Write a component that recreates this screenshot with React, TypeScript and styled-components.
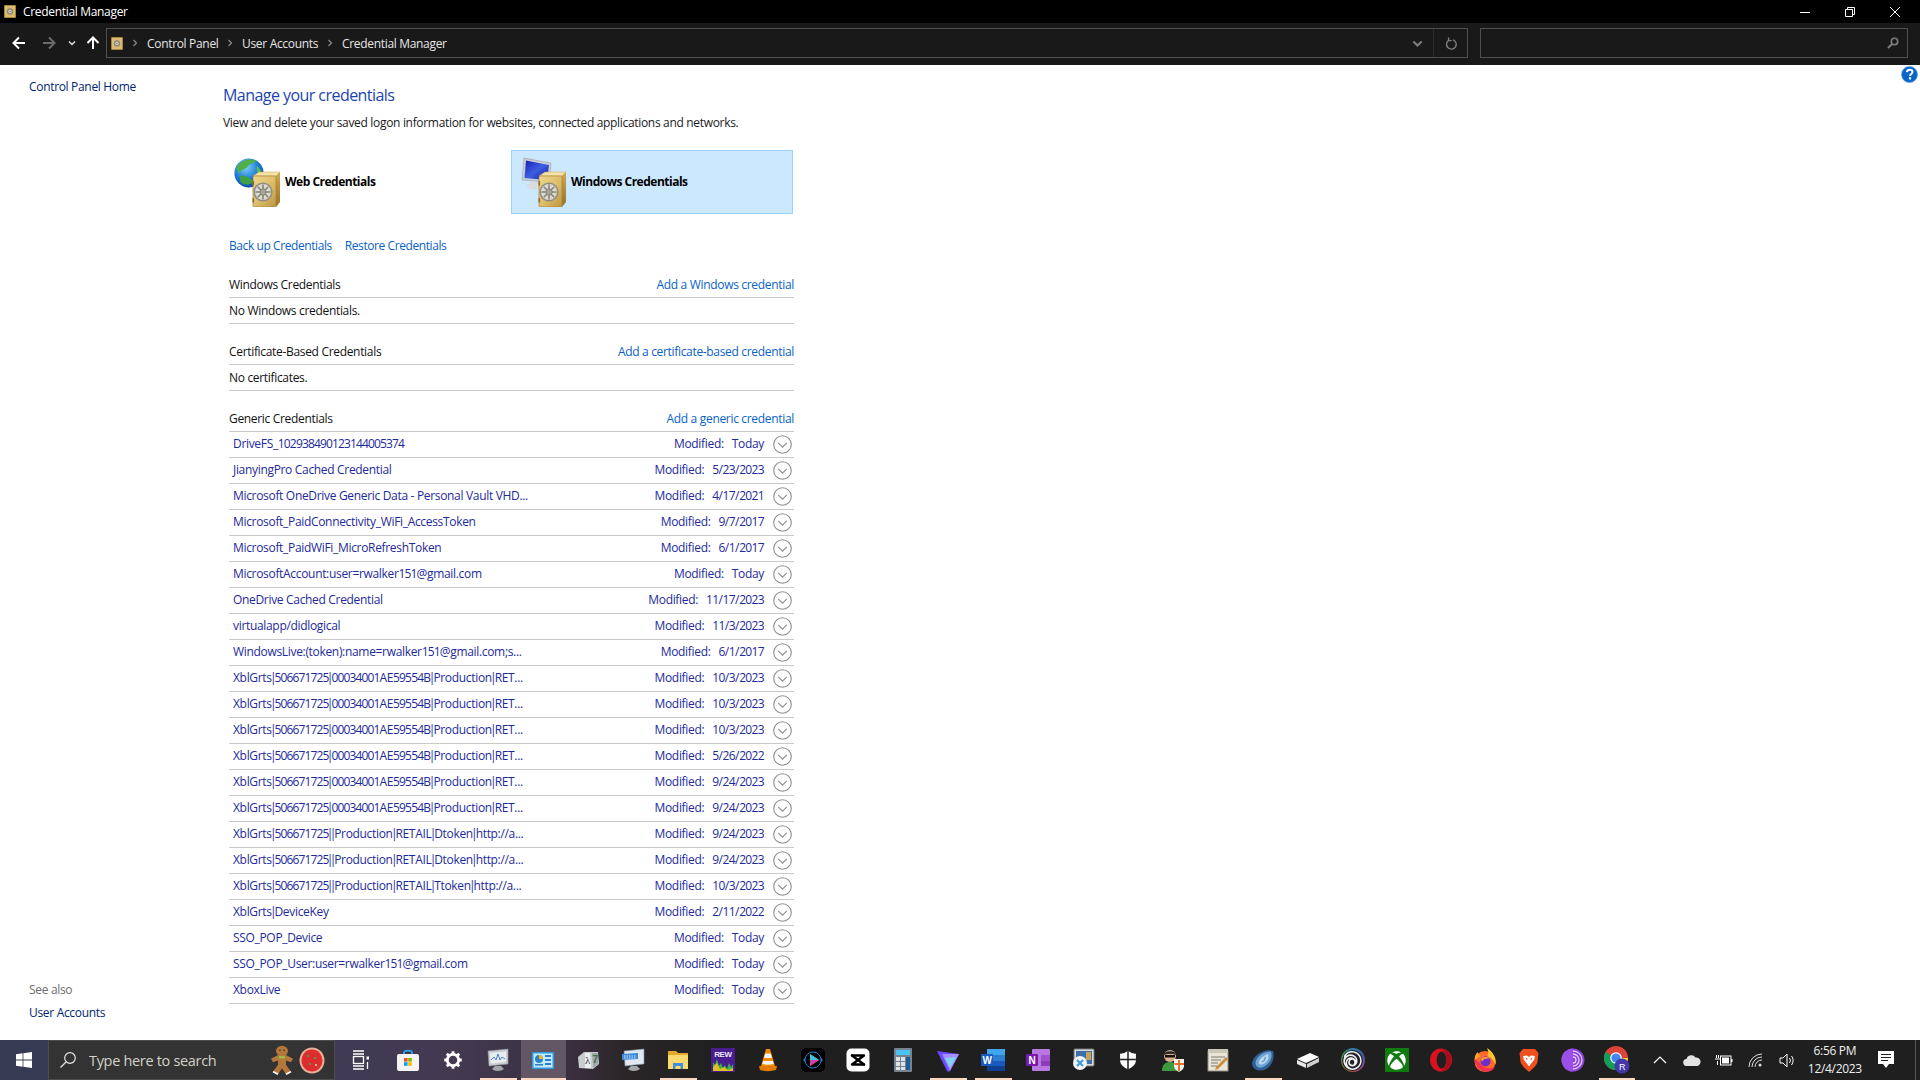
import React from "react";
import styled, { createGlobalStyle } from "styled-components";
import { FaXbox } from "react-icons/fa";
import { SiUbisoft } from "react-icons/si";

const FONT = `"Open Sans", "Noto Sans", sans-serif`;

const GlobalStyle = createGlobalStyle`
  html, body {
    margin: 0;
    padding: 0;
    width: 1920px;
    height: 1080px;
    overflow: hidden;
    background: #fff;
  }
  * { box-sizing: border-box; }
`;

const Page = styled.div`
  display: flex;
  flex-direction: column;
  width: 1920px;
  height: 1080px;
  font-family: ${FONT};
  font-size: 12px;
  letter-spacing: -0.32px;
`;

/* ---- title bar + address bar ---- */

const TitleBar = styled.div`
  display: flex;
  align-items: center;
  height: 23px;
  flex: none;
  background: #000;
  color: #fff;
  padding-left: 4px;
`;

const TitleText = styled.span`
  margin-left: 7px;
`;

const WindowButtons = styled.div`
  display: flex;
  margin-left: auto;
  padding-right: 3px;
`;

const WindowButton = styled.div`
  display: flex;
  align-items: center;
  justify-content: center;
  width: 45px;
  height: 21px;
`;

const ToolBar = styled.div`
  display: flex;
  align-items: center;
  height: 42px;
  flex: none;
  background: #191919;
  padding: 0 12px 2px 0;
`;

const NavGroup = styled.div`
  display: flex;
  align-items: center;
  width: 106px;
  flex: none;
`;

const NavButton = styled.div<{ $w: number }>`
  display: flex;
  align-items: center;
  justify-content: center;
  width: ${(p) => p.$w}px;
  height: 30px;
`;

const AddressBox = styled.div`
  display: flex;
  align-items: center;
  width: 1362px;
  height: 30px;
  flex: none;
  border: 1px solid #4f4f4f;
  color: #e6e6e6;
  padding-left: 4px;
`;

const Crumb = styled.span<{ $w: number }>`
  display: inline-block;
  width: ${(p) => p.$w}px;
  white-space: nowrap;
`;

const CrumbSep = styled.span`
  display: flex;
  justify-content: center;
  width: 24px;
`;

const AddressEnd = styled.div`
  display: flex;
  align-items: center;
  margin-left: auto;
  height: 100%;
`;

const AddressDrop = styled.div`
  display: flex;
  align-items: center;
  justify-content: center;
  width: 32px;
  height: 100%;
  border-right: 1px solid #2b2b2b;
`;

const AddressRefresh = styled.div`
  display: flex;
  align-items: center;
  justify-content: center;
  width: 33px;
  height: 100%;
`;

const SearchBox = styled.div`
  display: flex;
  align-items: center;
  justify-content: flex-end;
  width: 428px;
  height: 30px;
  margin-left: 12px;
  border: 1px solid #4f4f4f;
  padding-right: 8px;
`;

/* ---- content ---- */

const Content = styled.div`
  flex: 1;
  display: grid;
  grid-template-columns: 223px 1fr auto;
  min-height: 0;
  background: #fff;
`;

const SidePane = styled.div`
  display: flex;
  flex-direction: column;
  padding: 14px 0 19px 29px;
  line-height: 16px;
`;

const SideLink = styled.div`
  color: #00266e;
`;

const SeeAlso = styled.div`
  margin-top: auto;
  margin-bottom: 7px;
  color: #6d6d6d;
`;

const Main = styled.div`
  padding-top: 19px;
  width: 571px;
`;

const Heading = styled.div`
  font-size: 16px;
  line-height: 22px;
  letter-spacing: -0.55px;
  color: #1a44b0;
`;

const Description = styled.div`
  margin-top: 9px;
  line-height: 16px;
  color: #1a1a1a;
`;

const TileRow = styled.div`
  display: grid;
  grid-template-columns: 286px 282px;
  margin: 19px 0 0 2px;
`;

const Tile = styled.div<{ $selected?: boolean }>`
  display: flex;
  align-items: center;
  height: 64px;
  padding-left: 6px;
  gap: 3px;
  font-weight: 700;
  letter-spacing: -0.5px;
  color: #000;
  background: ${(p) => (p.$selected ? "#cce8ff" : "transparent")};
  border: 1px solid ${(p) => (p.$selected ? "#99d1ff" : "transparent")};
`;

const TileLabel = styled.span`
  margin-bottom: 2px;
`;

const TopLinks = styled.div`
  display: flex;
  gap: 13px;
  margin: 24px 0 18px 6px;
  line-height: 16px;
  letter-spacing: -0.42px;
  color: #0a62c9;
`;

const Section = styled.div`
  margin: 0 0 15px 6px;
  width: 565px;
`;

const SectionHead = styled.div`
  display: flex;
  justify-content: space-between;
  align-items: center;
  height: 26px;
  border-bottom: 1px solid #c9c9c9;
  color: #111;
`;

const SectionLink = styled.span`
  color: #0a62c9;
`;

const EmptyRow = styled.div`
  display: flex;
  align-items: center;
  height: 26px;
  border-bottom: 1px solid #c9c9c9;
  color: #111;
`;

const CredRow = styled.div`
  display: flex;
  align-items: center;
  height: 26px;
  padding: 0 2px 0 4px;
  border-bottom: 1px solid #c9c9c9;
  color: #1d2a9c;
`;

const CredName = styled.span`
  white-space: nowrap;
  margin-bottom: 2px;
`;

const CredMeta = styled.span`
  margin-left: auto;
  margin-bottom: 2px;
  display: flex;
  gap: 8px;
`;

const Digits = styled.span<{ $track: number }>`
  letter-spacing: ${(p) => p.$track}px;
`;

const Pipe = styled.span`
  margin: 0 -1.75px;
`;

const ExpandIcon = styled.span`
  display: flex;
  margin-left: 9px;
`;

const HelpColumn = styled.div`
  padding: 1px 2px 0 0;
`;

/* ---- taskbar ---- */

const TaskBar = styled.div`
  display: flex;
  align-items: center;
  height: 40px;
  flex: none;
  background: linear-gradient(
    90deg,
    #363a53 0,
    #3f3a55 280px,
    #433a52 450px,
    #3a2f3f 570px,
    #2a2628 625px,
    #1f1f1f 720px
  );
  color: #fff;
`;

const StartButton = styled.div`
  display: flex;
  align-items: center;
  justify-content: center;
  width: 48px;
  height: 40px;
  flex: none;
`;

const SearchBar = styled.div`
  display: flex;
  align-items: center;
  width: 287px;
  height: 40px;
  flex: none;
  background: #333;
  border: 1px solid #4d4d4d;
  padding: 0 0 0 10px;
  color: #d2d2c8;
  font-size: 14.5px;
`;

const SearchHint = styled.span`
  margin-left: 12px;
`;

const Doodle = styled.div`
  display: flex;
  align-items: center;
  gap: 4px;
  margin-left: auto;
  margin-right: 9px;
`;

const TaskView = styled.div`
  display: flex;
  align-items: center;
  justify-content: center;
  width: 50.5px;
  height: 40px;
  flex: none;
`;

const Slot = styled.div<{ $open?: boolean; $active?: boolean; $w: number }>`
  position: relative;
  display: flex;
  align-items: center;
  justify-content: center;
  width: ${(p) => p.$w}px;
  height: 40px;
  flex: none;
  background: ${(p) => (p.$active ? "#635665" : "transparent")};
  &::after {
    content: "";
    display: ${(p) => (p.$open ? "block" : "none")};
    position: absolute;
    bottom: 0;
    left: ${(p) => (p.$active ? "0" : "4px")};
    right: ${(p) => (p.$active ? "0" : "4px")};
    height: 2px;
    background: #ffd8c2;
  }
`;

const XboxTile = styled.div`
  display: flex;
  align-items: center;
  justify-content: center;
  width: 24px;
  height: 24px;
  background: #107c10;
  border-radius: 1px;
`;

const UplayRing = styled.div`
  display: flex;
  align-items: center;
  justify-content: center;
  width: 24px;
  height: 24px;
  border-radius: 50%;
  background: conic-gradient(#2f7fb0, #3d5a9e, #8a4fa0, #a3503f, #8f8a30, #3f8f55, #2f7fb0);
`;

const UplayInner = styled.div`
  display: flex;
  align-items: center;
  justify-content: center;
  width: 21px;
  height: 21px;
  border-radius: 50%;
  background: #22222c;
`;

const Tray = styled.div`
  display: flex;
  align-items: center;
  margin-left: 4.7px;
`;

const TrayItem = styled.div`
  display: flex;
  align-items: center;
  justify-content: center;
  width: 32px;
  height: 40px;
`;

const Clock = styled.div`
  display: flex;
  flex-direction: column;
  align-items: center;
  width: 62px;
  line-height: 18px;
  color: #f0f0f0;
`;

const Notify = styled.div`
  display: flex;
  align-items: center;
  justify-content: center;
  width: 40px;
  height: 40px;
`;

const DesktopEdge = styled.div`
  width: 1px;
  height: 40px;
  margin-left: 9px;
  background: #555;
`;

/* ---- drawings ---- */

const SmallSafe = () => (
  <svg width="12" height="13" viewBox="0 0 12 13">
    <rect width="12" height="13" rx="1" fill="#a98338" />
    <rect x="1" y="1" width="10" height="11" fill="#d9bb72" />
    <circle cx="6" cy="6.5" r="3.2" fill="#8d8a7c" />
    <circle cx="6" cy="6.5" r="1.7" fill="#d9d6c8" />
    <circle cx="6" cy="6.5" r="0.7" fill="#6d6b60" />
  </svg>
);

const SafeDefs = () => (
  <defs>
    <linearGradient id="safeFront" x1="0" y1="0" x2="1" y2="1">
      <stop offset="0" stopColor="#efd78f" />
      <stop offset="0.55" stopColor="#dcbc68" />
      <stop offset="1" stopColor="#bd9440" />
    </linearGradient>
    <linearGradient id="safeSide" x1="0" y1="0" x2="0" y2="1">
      <stop offset="0" stopColor="#d0a853" />
      <stop offset="1" stopColor="#96722a" />
    </linearGradient>
    <radialGradient id="globeSea" cx="0.4" cy="0.3" r="0.8">
      <stop offset="0" stopColor="#7fd0f5" />
      <stop offset="0.55" stopColor="#1a78d2" />
      <stop offset="1" stopColor="#0b3f96" />
    </radialGradient>
    <linearGradient id="screenBlue" x1="0" y1="0" x2="1" y2="1">
      <stop offset="0" stopColor="#1520b0" />
      <stop offset="0.5" stopColor="#3e5fe0" />
      <stop offset="1" stopColor="#101a9a" />
    </linearGradient>
  </defs>
);

const BigSafe = () => (
  <g>
    <path d="M21 19L27 15H48L44 19Z" fill="#f5e2a6" stroke="#c9a552" strokeWidth="0.5" />
    <path d="M44 19L48 15V45L44 50Z" fill="url(#safeSide)" />
    <rect x="21" y="19" width="23" height="31" rx="1" fill="url(#safeFront)" stroke="#a98338" strokeWidth="0.7" />
    <circle cx="31" cy="35" r="9.6" fill="#8f8d82" />
    <circle cx="31" cy="35" r="8" fill="#dddbd0" />
    <path d="M31 27.5V42.5M23.5 35H38.5M25.7 29.7L36.3 40.3M36.3 29.7L25.7 40.3" stroke="#868479" strokeWidth="1.6" />
    <circle cx="31" cy="35" r="3.2" fill="#a7a599" stroke="#77756a" strokeWidth="0.7" />
    <rect x="20.5" y="24" width="1.6" height="4.5" fill="#8d6c28" />
    <rect x="20.5" y="41" width="1.6" height="4.5" fill="#8d6c28" />
  </g>
);

const WebCredIcon = () => (
  <svg width="50" height="50" viewBox="0 0 50 50">
    <SafeDefs />
    <circle cx="17" cy="16" r="14.6" fill="url(#globeSea)" />
    <path d="M6 8C10 3 18 1 24 3.5C23 7 18 6 16 9C14 13 9 11 8 16C5 15 4 11 6 8Z" fill="#4fb04a" />
    <path d="M8 19C13 18 19 21 21 25C17 29 10 28 8 24Z" fill="#3fa046" />
    <path d="M25 9C28 11 30 15 29 19C26 18 24 14 25 9Z" fill="#5aba55" />
    <BigSafe />
  </svg>
);

const WinCredIcon = () => (
  <svg width="50" height="50" viewBox="0 0 50 50">
    <SafeDefs />
    <path d="M6 1L33 6L31 25L4 23Z" fill="#c9ced6" stroke="#8f97a3" strokeWidth="0.5" />
    <path d="M8 3.5L31 8L29 23L6.5 21Z" fill="url(#screenBlue)" />
    <path d="M13 25L22 25L26 30C20 34 11 33 8 29Z" fill="#d9dbdc" />
    <BigSafe />
  </svg>
);

const Arrow = ({ color, dir }: { color: string; dir: "left" | "right" | "up" }) => {
  const rot = dir === "left" ? 0 : dir === "right" ? 180 : 90;
  return (
    <svg width="14" height="14" viewBox="0 0 14 14" style={{ transform: `rotate(${rot}deg)` }}>
      <path d="M1.5 7H13M7 1.5L1.5 7L7 12.5" fill="none" stroke={color} strokeWidth="2" />
    </svg>
  );
};

const TinyChevron = ({ color, size = 8 }: { color: string; size?: number }) => (
  <svg width={size} height={size} viewBox="0 0 8 8">
    <path d="M1 2.5L4 5.5L7 2.5" fill="none" stroke={color} strokeWidth="1.5" />
  </svg>
);

const CrumbChevron = () => (
  <svg width="6" height="8" viewBox="0 0 6 8">
    <path d="M1.5 1L4.5 4L1.5 7" fill="none" stroke="#8a8a8a" strokeWidth="1.2" />
  </svg>
);

const ExpandCircle = () => (
  <svg width="19" height="19" viewBox="0 0 19 19">
    <circle cx="9.5" cy="9.5" r="8.8" fill="#fff" stroke="#8e8e8e" strokeWidth="1.1" />
    <path d="M5.2 7.8L9.5 12.2L13.8 7.8" fill="none" stroke="#8e8e8e" strokeWidth="1.1" />
  </svg>
);

const HelpIcon = () => (
  <svg width="17" height="17" viewBox="0 0 17 17">
    <circle cx="8.5" cy="8.5" r="8" fill="#0a63c9" stroke="#5d9fe0" strokeWidth="0.8" />
    <path d="M5.8 6.2C6 4.6 7.2 3.8 8.7 3.8C10.4 3.8 11.5 4.8 11.5 6.1C11.5 8 9 8 9 10" fill="none" stroke="#fff" strokeWidth="1.9" />
    <rect x="7.9" y="11.2" width="2.2" height="2.2" fill="#fff" />
  </svg>
);

const WinLogo = () => (
  <svg width="16" height="16" viewBox="0 0 16 16" fill="#fff">
    <path d="M0 2.3L6.6 1.3V7.5H0ZM7.4 1.2L16 0V7.5H7.4ZM0 8.4H6.6V14.7L0 13.7ZM7.4 8.4H16V16L7.4 14.8Z" />
  </svg>
);

const Svg24 = ({ children, size = 24 }: { children: React.ReactNode; size?: number }) => (
  <svg width={size} height={size} viewBox="0 0 24 24">
    {children}
  </svg>
);

const TASK_ICONS: { key: string; open?: boolean; active?: boolean; icon: React.ReactNode }[] = [
  {
    key: "store",
    icon: (
      <Svg24>
        <path d="M8 7V4.5C8 2 16 2 16 4.5V7" fill="none" stroke="#2aa4ef" strokeWidth="1.8" />
        <rect x="1" y="6" width="22" height="17" rx="2" fill="#f4f4f4" />
        <rect x="8" y="10" width="3.6" height="3.6" fill="#f25022" />
        <rect x="12.2" y="10" width="3.6" height="3.6" fill="#7fba00" />
        <rect x="8" y="14.2" width="3.6" height="3.6" fill="#00a4ef" />
        <rect x="12.2" y="14.2" width="3.6" height="3.6" fill="#ffb900" />
      </Svg24>
    ),
  },
  {
    key: "settings",
    icon: (
      <Svg24 size={20}>
        <circle cx="12" cy="12" r="6.8" fill="none" stroke="#fff" strokeWidth="3.4" />
        <path d="M12 1.5V5M12 19V22.5M1.5 12H5M19 12H22.5M4.6 4.6L7 7M17 17L19.4 19.4M19.4 4.6L17 7M7 17L4.6 19.4" stroke="#fff" strokeWidth="3.4" />
      </Svg24>
    ),
  },
  {
    key: "perfmon",
    open: true,
    icon: (
      <Svg24>
        <path d="M2 3L22 1V16L3 18Z" fill="#c9ccd0" stroke="#8e9297" strokeWidth="0.6" />
        <path d="M4 5L20 3.5V14L4.5 15.5Z" fill="#e8ecef" />
        <path d="M5 12L8 9L10 12L12 6L14 12L16 9L19 11" fill="none" stroke="#4a82c4" strokeWidth="1" />
        <path d="M9 18H15L18 21C15 23.5 8 23.5 6 21Z" fill="#a4a7ab" />
      </Svg24>
    ),
  },
  {
    key: "credential",
    open: true,
    active: true,
    icon: (
      <svg width="22" height="17" viewBox="0 0 22 17">
        <rect width="22" height="17" fill="#2f9be0" />
        <rect x="1.5" y="1.5" width="19" height="14" fill="#c6e9fb" />
        <circle cx="7" cy="7" r="4" fill="#2b82cc" />
        <path d="M7 7V3A4 4 0 0 1 11 7Z" fill="#f0b429" />
        <rect x="3" y="12" width="8" height="1.6" fill="#2b82cc" />
        <rect x="13" y="3" width="6" height="2" fill="#2b82cc" />
        <rect x="13" y="7" width="6" height="2" fill="#2b82cc" />
        <rect x="13" y="11" width="6" height="2" fill="#2b82cc" />
      </svg>
    ),
  },
  {
    key: "cube",
    icon: (
      <Svg24>
        <path d="M2 9L8 4L22 4L23 16L17 21L3 20Z" fill="#c9cdd1" />
        <path d="M9 5L14 5L15 20L9 20Z" fill="#eceef0" />
        <path d="M16 5L22 5L22 16L17 20Z" fill="#9fa5aa" />
        <text x="11.5" y="16" fontFamily="Liberation Serif" fontSize="11" fill="#334" textAnchor="middle">
          λ
        </text>
        <text x="19" y="15" fontFamily="Liberation Sans" fontSize="10" fontWeight="700" fill="#3f6f3f" textAnchor="middle">
          7
        </text>
      </Svg24>
    ),
  },
  {
    key: "terminal",
    icon: (
      <Svg24>
        <path d="M3 3L23 1V16L4 18Z" fill="#dfe7f0" stroke="#7c8b9c" strokeWidth="0.6" />
        <path d="M1 6L17 5V11L1 12Z" fill="#3b8ad8" />
        <path d="M3 8H15M3 10H15" stroke="#cfe4f7" strokeWidth="1" strokeDasharray="1.5 1" />
        <path d="M10 18H16L19 21C16 23.5 9 23.5 7 21Z" fill="#a4a7ab" />
      </Svg24>
    ),
  },
  {
    key: "explorer",
    open: true,
    icon: (
      <Svg24>
        <path d="M2 3H10L12 5H22V21H2Z" fill="#e2a82e" />
        <rect x="2" y="7" width="20" height="14" fill="#fbd971" />
        <path d="M7 21V15H17V21H14.5V18H9.5V21Z" fill="#3c91d8" />
      </Svg24>
    ),
  },
  {
    key: "rew",
    icon: (
      <Svg24>
        <rect width="24" height="24" fill="#4a1d8f" />
        <text x="12" y="9" fontFamily="Liberation Sans" fontSize="8" fontWeight="700" fill="#e8e4f4" textAnchor="middle">
          REW
        </text>
        <path d="M2 23V14L4 17L6 11L8 18L10 15L12 20L14 17L16 21L18 15L20 19L22 16V23Z" fill="#3fae49" />
        <path d="M2 23V19L6 15L9 21L13 19L17 22L22 20V23Z" fill="#e0c020" />
      </Svg24>
    ),
  },
  {
    key: "vlc",
    icon: (
      <Svg24>
        <path d="M10 1H14L19 18H5Z" fill="#f08a00" />
        <path d="M9.2 5.5H14.8L16 10H8ZM7.2 13H16.8L17.8 16C14 17 10 17 6.2 16Z" fill="#f5f5f5" />
        <path d="M3 18H21L20 22C15 23.5 9 23.5 4 22Z" fill="#e47a00" />
      </Svg24>
    ),
  },
  {
    key: "player",
    icon: (
      <Svg24>
        <rect width="24" height="24" rx="5" fill="#000" />
        <circle cx="12" cy="12" r="8" fill="none" stroke="#1b7fd0" strokeWidth="1" />
        <path d="M2 12L4 10V14ZM22 12L20 10V14Z" fill="#1b7fd0" />
        <path d="M9 6L18 12L9 18Z" fill="#e0a020" />
        <path d="M9 6L18 12L9 12Z" fill="#3fc1e8" />
        <path d="M9 12L18 12L9 18Z" fill="#d23fa0" />
      </Svg24>
    ),
  },
  {
    key: "capcut",
    icon: (
      <Svg24>
        <rect x="0.5" y="0.5" width="23" height="23" rx="5" fill="#fff" />
        <path d="M6 7.5H18L6 16.5H18" fill="none" stroke="#000" strokeWidth="2.4" strokeLinejoin="round" strokeLinecap="round" />
        <path d="M6 7.5L18 16.5" fill="none" stroke="#000" strokeWidth="2.4" strokeLinecap="round" />
      </Svg24>
    ),
  },
  {
    key: "calc",
    icon: (
      <Svg24>
        <rect x="3" y="0" width="18" height="24" rx="1" fill="#75828f" />
        <rect x="5" y="2" width="14" height="5" fill="#4cc2f1" />
        <path d="M5 9H9V13H5ZM10 9H14V13H10ZM5 14H9V18H5ZM5 19H9V22H5ZM10 14H14V18H10ZM10 19H14V22H10Z" fill="#dfe3e6" />
        <path d="M15 9H19V22H15Z" fill="#1b5f96" />
      </Svg24>
    ),
  },
  {
    key: "proton",
    open: true,
    icon: (
      <Svg24>
        <path d="M1 3L23 6L14 23C13 24 12 24 11 23Z" fill="#6d4aff" />
        <path d="M6 6L23 6L14 23Z" fill="#a58cff" />
        <path d="M9 10L20 9L14 20Z" fill="#7ad7ee" />
      </Svg24>
    ),
  },
  {
    key: "word",
    open: true,
    icon: (
      <Svg24>
        <rect x="6" y="1" width="18" height="22" rx="1" fill="#2b7cd3" />
        <rect x="6" y="1" width="18" height="6" fill="#41a5ee" />
        <rect x="6" y="13" width="18" height="5" fill="#185abd" />
        <rect x="6" y="18" width="18" height="5" fill="#103f91" />
        <rect x="0" y="6" width="12" height="12" rx="1" fill="#185abd" />
        <text x="6" y="15.5" fontFamily="Liberation Sans" fontSize="10" fontWeight="700" fill="#fff" textAnchor="middle">
          W
        </text>
      </Svg24>
    ),
  },
  {
    key: "onenote",
    icon: (
      <Svg24>
        <rect x="6" y="1" width="18" height="22" rx="1" fill="#ba77e0" />
        <rect x="15" y="7" width="9" height="6" fill="#a04fcf" />
        <rect x="15" y="13" width="9" height="5" fill="#8d3bb8" />
        <rect x="0" y="6" width="12" height="12" rx="1" fill="#7719aa" />
        <text x="6" y="15.5" fontFamily="Liberation Sans" fontSize="10" fontWeight="700" fill="#fff" textAnchor="middle">
          N
        </text>
      </Svg24>
    ),
  },
  {
    key: "remote",
    icon: (
      <Svg24>
        <rect x="3" y="1" width="20" height="17" rx="1" fill="#d9dadb" stroke="#777" />
        <rect x="5" y="3" width="16" height="13" fill="#3d6ea8" />
        <rect x="15" y="4" width="5" height="8" fill="#c5a35c" />
        <circle cx="9" cy="15" r="7" fill="#f2f2f2" />
        <path d="M6 12L12 18M12 12L6 18" stroke="#3a9be0" strokeWidth="2" />
      </Svg24>
    ),
  },
  {
    key: "defender",
    icon: (
      <Svg24 size={20}>
        <path d="M12 1C15 3.5 18 4.5 21.5 4.5V12C21.5 17.5 17 21 12 23C7 21 2.5 17.5 2.5 12V4.5C6 4.5 9 3.5 12 1Z" fill="#fff" />
        <path d="M12 1V23M2.5 11.5H21.5" stroke="#1f1f1f" strokeWidth="1.8" />
      </Svg24>
    ),
  },
  {
    key: "agent",
    icon: (
      <Svg24>
        <circle cx="9" cy="8" r="6" fill="#d9b08c" />
        <path d="M3 7C3 2 15 2 15 7L12 6H6Z" fill="#2b2b2b" />
        <rect x="4" y="7" width="10" height="2.5" fill="#111" />
        <path d="M1 23C1 16 5 14 9 14C13 14 16 16 16 23Z" fill="#3f9a3f" />
        <path d="M13 11H23V18C23 21 20 23 18 24C16 23 13 21 13 18Z" fill="#f2f2f2" />
        <path d="M18 12V23M13.5 16H23" stroke="#e6722a" strokeWidth="2" />
      </Svg24>
    ),
  },
  {
    key: "notepad",
    icon: (
      <Svg24>
        <rect x="2" y="3" width="20" height="20" fill="#e9e6d8" stroke="#8d8d80" />
        <rect x="2" y="1" width="20" height="4" fill="#c9c7b6" />
        <path d="M5 9H19M5 12H15M5 15H12M5 18H11" stroke="#7a7a70" strokeWidth="1" />
        <path d="M10 19L20 9L22 11L12 21L9 22Z" fill="#c98f3c" />
      </Svg24>
    ),
  },
  {
    key: "stone",
    open: true,
    icon: (
      <Svg24>
        <path d="M22 3C24 9 22 18 13 22C7 24 1 21 1 15C2 8 13 0 22 3Z" fill="#2f5f96" />
        <path d="M20 4C22 9 19 16 12 19C7 21 4 18 4.5 14C6 8 14 3 20 4Z" fill="#6fa3d4" />
        <path d="M17 6C19 10 16 15 11 16.5C8 17 7 15 8 13C10 9 14 7 17 6Z" fill="#b7d6ef" />
        <path d="M14 9C14.5 11 13 13 11 14" fill="none" stroke="#5b8fc0" strokeWidth="1.2" />
      </Svg24>
    ),
  },
  {
    key: "box",
    icon: (
      <Svg24>
        <path d="M1 11L14 5L23 9L10 15Z" fill="#fff" />
        <path d="M1 12L10 16V20L1 16Z" fill="#e8e8e8" />
        <path d="M11 16L23 10V14L11 20Z" fill="#cfcfcf" />
      </Svg24>
    ),
  },
  {
    key: "uplay",
    icon: (
      <UplayRing>
        <UplayInner>
          <SiUbisoft size={19} color="#f2f2f2" />
        </UplayInner>
      </UplayRing>
    ),
  },
  {
    key: "xbox",
    icon: (
      <XboxTile>
        <FaXbox size={19} color="#fff" />
      </XboxTile>
    ),
  },
  {
    key: "opera",
    icon: (
      <Svg24>
        <ellipse cx="12" cy="12" rx="11" ry="11.5" fill="#d8121f" />
        <ellipse cx="12.5" cy="12" rx="4.8" ry="8.6" fill="#1f1f1f" />
        <path d="M12 .5C17.5 1 22.5 6 22.5 12C22.5 18 17.5 23 12 23.5C15 22 17.3 17.5 17.3 12C17.3 6.5 15 2 12 .5Z" fill="#a80e1a" />
      </Svg24>
    ),
  },
  {
    key: "firefox",
    icon: (
      <Svg24>
        <circle cx="12" cy="13.5" r="10.5" fill="#ff6a2b" />
        <path d="M14 0C20 4 24 10 22.5 17C21 12 18 9.5 14.5 8.5C15.5 5.5 15.5 3 14 0Z" fill="#ffc22e" />
        <path d="M1.5 11C2 19 9 25 16 23.5C19 23 21 21 22 18.5C18 21.5 10 21 7 15Z" fill="#f5304f" />
        <path d="M1.5 12C1.5 8 3 5.5 5 4C5 6 6 7.5 8 8Z" fill="#ffa32e" />
        <circle cx="12.5" cy="13.5" r="5" fill="#6b2fc4" />
        <path d="M8 11C10 8.5 14 8.5 16.5 10.5C13 10 10 11 9 14Z" fill="#ff9a3c" />
      </Svg24>
    ),
  },
  {
    key: "brave",
    icon: (
      <Svg24>
        <path d="M6 1H18L21.5 5L20.5 14C19.5 18 14 22 12 24C10 22 4.5 18 3.5 14L2.5 5Z" fill="#f1501e" />
        <path d="M6 8L10 7.5L12 9L14 7.5L18 8L17 12L14.5 15L12 18.5L9.5 15L7 12Z" fill="#fff" />
        <path d="M8.5 9.5L11 11L9.5 12ZM15.5 9.5L13 11L14.5 12Z" fill="#f1501e" />
      </Svg24>
    ),
  },
  {
    key: "tor",
    icon: (
      <Svg24>
        <circle cx="12" cy="12" r="11.5" fill="#8a3fd8" />
        <path d="M12 .5A11.5 11.5 0 0 0 12 23.5Z" fill="#9c4fe6" />
        <path d="M12 3A9 9 0 0 1 12 21M12 6A6 6 0 0 1 12 18M12 9A3 3 0 0 1 12 15" fill="none" stroke="#e2c9f8" strokeWidth="1.3" />
      </Svg24>
    ),
  },
  {
    key: "chrome",
    open: true,
    icon: (
      <svg width="26" height="28" viewBox="0 0 26 28">
        <circle cx="12" cy="12" r="12" fill="#db4437" />
        <path d="M12 12L1.6 6A12 12 0 0 0 12 24Z" fill="#0f9d58" />
        <path d="M12 12H24A12 12 0 0 1 12 24Z" fill="#ffcd40" />
        <circle cx="12" cy="12" r="5.8" fill="#fff" />
        <circle cx="12" cy="12" r="4.6" fill="#4285f4" />
        <circle cx="18" cy="20" r="7.5" fill="#4338a8" />
        <text x="18" y="23.5" fontFamily="Liberation Sans" fontSize="9" fill="#fff" textAnchor="middle">
          R
        </text>
      </svg>
    ),
  },
];

const ROWS: [string, string][] = [
  ["DriveFS_102938490123144005374", "Today"],
  ["JianyingPro Cached Credential", "5/23/2023"],
  ["Microsoft OneDrive Generic Data - Personal Vault VHD...", "4/17/2021"],
  ["Microsoft_PaidConnectivity_WiFi_AccessToken", "9/7/2017"],
  ["Microsoft_PaidWiFi_MicroRefreshToken", "6/1/2017"],
  ["MicrosoftAccount:user=rwalker151@gmail.com", "Today"],
  ["OneDrive Cached Credential", "11/17/2023"],
  ["virtualapp/didlogical", "11/3/2023"],
  ["WindowsLive:(token):name=rwalker151@gmail.com;s...", "6/1/2017"],
  ["XblGrts|506671725|00034001AE59554B|Production|RET...", "10/3/2023"],
  ["XblGrts|506671725|00034001AE59554B|Production|RET...", "10/3/2023"],
  ["XblGrts|506671725|00034001AE59554B|Production|RET...", "10/3/2023"],
  ["XblGrts|506671725|00034001AE59554B|Production|RET...", "5/26/2022"],
  ["XblGrts|506671725|00034001AE59554B|Production|RET...", "9/24/2023"],
  ["XblGrts|506671725|00034001AE59554B|Production|RET...", "9/24/2023"],
  ["XblGrts|506671725||Production|RETAIL|Dtoken|http://a...", "9/24/2023"],
  ["XblGrts|506671725||Production|RETAIL|Dtoken|http://a...", "9/24/2023"],
  ["XblGrts|506671725||Production|RETAIL|Ttoken|http://a...", "10/3/2023"],
  ["XblGrts|DeviceKey", "2/11/2022"],
  ["SSO_POP_Device", "Today"],
  ["SSO_POP_User:user=rwalker151@gmail.com", "Today"],
  ["XboxLive", "Today"],
];

// the fallback font has wider digits and pipes than the original, pull them in
function tightText(text: string, track: number) {
  return text.split(/(\d+|\|)/).map((part, i) => {
    if (part === "|") return <Pipe key={i}>|</Pipe>;
    if (/^\d+$/.test(part))
      return (
        <Digits key={i} $track={track}>
          {part}
        </Digits>
      );
    return part;
  });
}

export default function App() {
  return (
    <Page>
      <GlobalStyle />
      <TitleBar>
        <SmallSafe />
        <TitleText>Credential Manager</TitleText>
        <WindowButtons>
          <WindowButton>
            <svg width="10" height="10" viewBox="0 0 10 10">
              <path d="M0 5.5H10" stroke="#fff" />
            </svg>
          </WindowButton>
          <WindowButton>
            <svg width="10" height="10" viewBox="0 0 10 10">
              <path d="M.5 2.5H7.5V9.5H.5ZM2.5 2.5V.5H9.5V7.5H7.5" fill="none" stroke="#fff" />
            </svg>
          </WindowButton>
          <WindowButton>
            <svg width="10" height="10" viewBox="0 0 10 10">
              <path d="M0 0L10 10M10 0L0 10" stroke="#fff" />
            </svg>
          </WindowButton>
        </WindowButtons>
      </TitleBar>
      <ToolBar>
        <NavGroup>
          <NavButton $w={38}>
            <Arrow color="#fff" dir="left" />
          </NavButton>
          <NavButton $w={22}>
            <Arrow color="#6b6b6b" dir="right" />
          </NavButton>
          <NavButton $w={24}>
            <TinyChevron color="#e0e0e0" />
          </NavButton>
          <NavButton $w={18}>
            <Arrow color="#fff" dir="up" />
          </NavButton>
        </NavGroup>
        <AddressBox>
          <SmallSafe />
          <CrumbSep>
            <CrumbChevron />
          </CrumbSep>
          <Crumb $w={71}>Control Panel</Crumb>
          <CrumbSep>
            <CrumbChevron />
          </CrumbSep>
          <Crumb $w={76}>User Accounts</Crumb>
          <CrumbSep>
            <CrumbChevron />
          </CrumbSep>
          <Crumb $w={104}>Credential Manager</Crumb>
          <AddressEnd>
            <AddressDrop>
              <TinyChevron color="#7d7d7d" size={11} />
            </AddressDrop>
            <AddressRefresh>
              <svg width="12" height="13" viewBox="0 0 12 13">
                <path d="M8 2.8A4.8 4.8 0 1 1 3.6 3.4M3.6 .6V3.6H6.6" fill="none" stroke="#7d7d7d" strokeWidth="1.4" />
              </svg>
            </AddressRefresh>
          </AddressEnd>
        </AddressBox>
        <SearchBox>
          <svg width="12" height="12" viewBox="0 0 12 12">
            <circle cx="7.5" cy="4.5" r="3.2" fill="none" stroke="#7d7d7d" strokeWidth="1.6" />
            <path d="M5 7L1 11" stroke="#7d7d7d" strokeWidth="2" />
          </svg>
        </SearchBox>
      </ToolBar>
      <Content>
        <SidePane>
          <SideLink>Control Panel Home</SideLink>
          <SeeAlso>See also</SeeAlso>
          <SideLink>User Accounts</SideLink>
        </SidePane>
        <Main>
          <Heading>Manage your credentials</Heading>
          <Description>View and delete your saved logon information for websites, connected applications and networks.</Description>
          <TileRow>
            <Tile>
              <WebCredIcon />
              <TileLabel>Web Credentials</TileLabel>
            </Tile>
            <Tile $selected>
              <WinCredIcon />
              <TileLabel>Windows Credentials</TileLabel>
            </Tile>
          </TileRow>
          <TopLinks>
            <span>Back up Credentials</span>
            <span>Restore Credentials</span>
          </TopLinks>
          <Section>
            <SectionHead>
              Windows Credentials
              <SectionLink>Add a Windows credential</SectionLink>
            </SectionHead>
            <EmptyRow>No Windows credentials.</EmptyRow>
          </Section>
          <Section>
            <SectionHead>
              Certificate-Based Credentials
              <SectionLink>Add a certificate-based credential</SectionLink>
            </SectionHead>
            <EmptyRow>No certificates.</EmptyRow>
          </Section>
          <Section>
            <SectionHead>
              Generic Credentials
              <SectionLink>Add a generic credential</SectionLink>
            </SectionHead>
            {ROWS.map(([name, date], i) => (
              <CredRow key={i}>
                <CredName>{tightText(name, -0.85)}</CredName>
                <CredMeta>
                  <span>Modified:</span>
                  <span>{tightText(date, -0.65)}</span>
                </CredMeta>
                <ExpandIcon>
                  <ExpandCircle />
                </ExpandIcon>
              </CredRow>
            ))}
          </Section>
        </Main>
        <HelpColumn>
          <HelpIcon />
        </HelpColumn>
      </Content>
      <TaskBar>
        <StartButton>
          <WinLogo />
        </StartButton>
        <SearchBar>
          <svg width="18" height="18" viewBox="0 0 18 18">
            <circle cx="11" cy="7" r="5.3" fill="none" stroke="#e4e4e4" strokeWidth="1.2" />
            <path d="M7 11L1.5 16.5" stroke="#e4e4e4" strokeWidth="1.2" />
          </svg>
          <SearchHint>Type here to search</SearchHint>
          <Doodle>
            <svg width="26" height="31" viewBox="0 0 26 36" preserveAspectRatio="none">
              <circle cx="13" cy="7" r="6" fill="#b5763a" />
              <path d="M10 11H16L24 16L22 20L17 18V23L22 31L17 34L13 27L9 34L4 31L9 23V18L4 20L2 16Z" fill="#b5763a" />
              <rect x="10" y="13" width="6" height="2.6" fill="#8fc83f" />
              <path d="M4 31L9 34M17 34L22 31" stroke="#fff" strokeWidth="1.8" />
              <circle cx="11" cy="6" r="0.8" fill="#222" />
              <circle cx="15" cy="6" r="0.8" fill="#222" />
            </svg>
            <svg width="26" height="27" viewBox="0 0 26 27">
              <ellipse cx="13" cy="13.5" rx="12.5" ry="13" fill="#eab09a" />
              <ellipse cx="13" cy="13.5" rx="10.5" ry="11" fill="#dc2e2e" />
              <circle cx="9" cy="9" r="1" fill="#3fb04a" />
              <circle cx="16" cy="11" r="1" fill="#3fb04a" />
              <circle cx="11" cy="17" r="1" fill="#3fb04a" />
              <circle cx="17" cy="18" r="0.9" fill="#f5e6a0" />
            </svg>
          </Doodle>
        </SearchBar>
        <TaskView>
          <svg width="17" height="20" viewBox="0 0 17 20" fill="none" stroke="#fff" strokeWidth="1.3">
            <path d="M1 1H12M1 4H12M1 19H12M1 16H12" />
            <rect x="1.5" y="6.5" width="10" height="7" />
            <rect x="14.5" y="6.5" width="2.5" height="3" fill="#fff" stroke="none" />
            <path d="M15.5 12V19" />
          </svg>
        </TaskView>
        {TASK_ICONS.map((t, i) => (
          <Slot key={t.key} $open={t.open} $active={t.active} $w={i < 21 ? 45 : 44.1}>
            {t.icon}
          </Slot>
        ))}
        <Tray>
          <TrayItem>
            <svg width="14" height="8" viewBox="0 0 14 8">
              <path d="M1 7L7 1L13 7" fill="none" stroke="#fff" strokeWidth="1.2" />
            </svg>
          </TrayItem>
          <TrayItem>
            <svg width="18" height="12" viewBox="0 0 18 12">
              <path d="M4 12A3.5 3.5 0 0 1 3.5 5A5 5 0 0 1 12.5 3.5A4.3 4.3 0 0 1 14 12Z" fill="#e4e4e4" />
            </svg>
          </TrayItem>
          <TrayItem>
            <svg width="18" height="14" viewBox="0 0 18 14">
              <rect x="5.5" y="3" width="10.5" height="9" fill="none" stroke="#fff" />
              <rect x="7" y="4.5" width="7" height="6" fill="#fff" />
              <rect x="16" y="6" width="1.5" height="3" fill="#fff" />
              <path d="M0 6H5M1.5 2V5M3.5 2V5M2.5 8V12" stroke="#fff" />
            </svg>
          </TrayItem>
          <TrayItem>
            <svg width="15" height="15" viewBox="0 0 15 15" fill="none" stroke="#ddd">
              <path d="M1 14A13 13 0 0 1 14 1M4 14A10 10 0 0 1 14 4M7 14A7 7 0 0 1 14 7" />
              <circle cx="12" cy="12" r="1.5" fill="#ddd" stroke="none" />
            </svg>
          </TrayItem>
          <TrayItem>
            <svg width="17" height="15" viewBox="0 0 17 15" fill="none" stroke="#fff">
              <path d="M1 5H4L8 1V14L4 10H1Z" />
              <path d="M10.5 5A4 4 0 0 1 10.5 10M12.5 3A7 7 0 0 1 12.5 12" />
            </svg>
          </TrayItem>
          <Clock>
            <span>6:56 PM</span>
            <span>12/4/2023</span>
          </Clock>
          <Notify>
            <svg width="16" height="18" viewBox="0 0 16 18">
              <path d="M0 0H16V13H11L8 17L5 13H0Z" fill="#fff" />
              <path d="M3 3.5H13M3 6.5H13M3 9.5H10" stroke="#1f1f1f" />
            </svg>
          </Notify>
        </Tray>
        <DesktopEdge />
      </TaskBar>
    </Page>
  );
}
